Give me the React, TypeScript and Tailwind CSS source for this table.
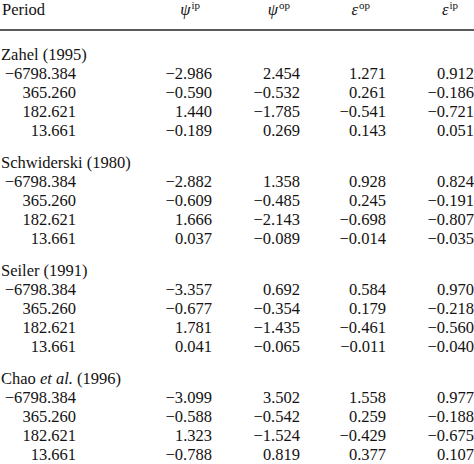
import React from "react";

type Row = [string, string, string, string, string];

const groups: { title: React.ReactNode; rows: Row[] }[] = [
  {
    title: "Zahel (1995)",
    rows: [
      ["−6798.384", "−2.986", "2.454", "1.271", "0.912"],
      ["365.260", "−0.590", "−0.532", "0.261", "−0.186"],
      ["182.621", "1.440", "−1.785", "−0.541", "−0.721"],
      ["13.661", "−0.189", "0.269", "0.143", "0.051"],
    ],
  },
  {
    title: "Schwiderski (1980)",
    rows: [
      ["−6798.384", "−2.882", "1.358", "0.928", "0.824"],
      ["365.260", "−0.609", "−0.485", "0.245", "−0.191"],
      ["182.621", "1.666", "−2.143", "−0.698", "−0.807"],
      ["13.661", "0.037", "−0.089", "−0.014", "−0.035"],
    ],
  },
  {
    title: "Seiler (1991)",
    rows: [
      ["−6798.384", "−3.357", "0.692", "0.584", "0.970"],
      ["365.260", "−0.677", "−0.354", "0.179", "−0.218"],
      ["182.621", "1.781", "−1.435", "−0.461", "−0.560"],
      ["13.661", "0.041", "−0.065", "−0.011", "−0.040"],
    ],
  },
  {
    title: (
      <>
        Chao <i>et al.</i> (1996)
      </>
    ),
    rows: [
      ["−6798.384", "−3.099", "3.502", "1.558", "0.977"],
      ["365.260", "−0.588", "−0.542", "0.259", "−0.188"],
      ["182.621", "1.323", "−1.524", "−0.429", "−0.675"],
      ["13.661", "−0.788", "0.819", "0.377", "0.107"],
    ],
  },
];

function Head({ sym, sup }: { sym: string; sup: string }) {
  return (
    <span className="whitespace-nowrap">
      <i>{sym}</i>
      <span className="relative -top-[6px] ml-[1px] text-[11px]">{sup}</span>
    </span>
  );
}

const grid = "grid grid-cols-[76px_136px_88px_86px_88px]";

export default function App() {
  return (
    <div
      className="w-[474px] h-[464px] overflow-hidden bg-white text-[#141212] text-[16.5px]"
      style={{ fontFamily: '"Liberation Serif", "Times New Roman", serif' }}
    >
      <div className={`${grid} leading-[19px] pb-[8px]`}>
        <div className="pl-[2px] whitespace-nowrap">Period</div>
        <div className="text-right pr-[12px]">
          <Head sym="ψ" sup="ip" />
        </div>
        <div className="text-right pr-[10px]">
          <Head sym="ψ" sup="op" />
        </div>
        <div className="text-right pr-[16px]">
          <Head sym="ε" sup="op" />
        </div>
        <div className="text-right pr-[16px]">
          <Head sym="ε" sup="ip" />
        </div>
      </div>
      <div className="h-[2px] bg-[#5a5a5a]" />
      <div className="mt-[14px] flex flex-col gap-[13px]">
        {groups.map((g, gi) => (
          <div key={gi} className="flex flex-col leading-[19px]">
            <div className="pl-[1px] whitespace-nowrap">{g.title}</div>
            {g.rows.map((r, ri) => (
              <div key={ri} className={grid}>
                {r.map((c, ci) => (
                  <div key={ci} className="text-right whitespace-nowrap">
                    {c}
                  </div>
                ))}
              </div>
            ))}
          </div>
        ))}
      </div>
    </div>
  );
}
